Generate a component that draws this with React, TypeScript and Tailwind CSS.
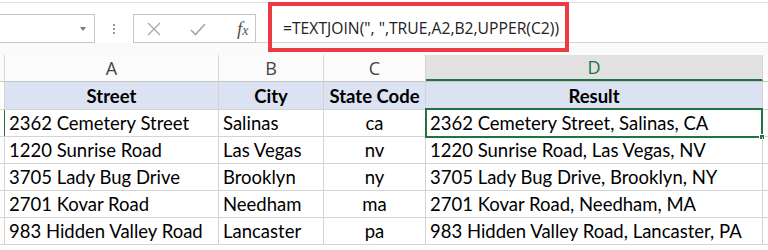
const rows = [
  { street: "2362 Cemetery Street", city: "Salinas", code: "ca", result: "2362 Cemetery Street, Salinas, CA" },
  { street: "1220 Sunrise Road", city: "Las Vegas", code: "nv", result: "1220 Sunrise Road, Las Vegas, NV" },
  { street: "3705 Lady Bug Drive", city: "Brooklyn", code: "ny", result: "3705 Lady Bug Drive, Brooklyn, NY" },
  { street: "2701 Kovar Road", city: "Needham", code: "ma", result: "2701 Kovar Road, Needham, MA" },
  { street: "983 Hidden Valley Road", city: "Lancaster", code: "pa", result: "983 Hidden Valley Road, Lancaster, PA" },
];

const cell = "h-full border-r border-[#d4d4d4] flex items-end pb-[3px] px-[4px] leading-[20px] whitespace-nowrap";

function ColHeader({ label, w, active }: { label: string; w: string; active?: boolean }) {
  return (
    <div
      className={`${w} h-full border-r border-[#d4d4d4] flex items-center justify-center text-[18px] leading-[20px] ${
        active ? "bg-[#e1e1e1] text-[#217346] border-b-2 border-b-[#217346]" : "text-[#444]"
      }`}
    >
      {label}
    </div>
  );
}

export default function App() {
  return (
    <div
      className="relative w-[768px] h-[250px] bg-white overflow-hidden text-black"
      style={{ fontFamily: "Lato, 'Open Sans', sans-serif" }}
    >
      <div className="h-[3px] border-b border-[#e1e1e1]" />

      {/* formula bar */}
      <div className="flex h-[40px] items-end">
        <div className="relative w-[95px] h-[29px] border border-l-0 border-[#c6c6c6] bg-white">
          <div className="absolute right-[8px] top-[12px] w-0 h-0 border-l-[3px] border-r-[3px] border-t-[4px] border-l-transparent border-r-transparent border-t-[#7a7a7a]" />
        </div>
        <div className="w-[38px] h-[29px] flex flex-col items-center justify-center gap-[2px]">
          <span className="w-[2px] h-[2px] bg-[#999]" />
          <span className="w-[2px] h-[2px] bg-[#999]" />
          <span className="w-[2px] h-[2px] bg-[#999]" />
        </div>
        <div className="w-[123px] h-[29px] border border-[#c6c6c6] flex items-center">
          <svg width="14" height="14" viewBox="0 0 14 14" className="ml-[13px]">
            <path d="M1 1L13 13M13 1L1 13" stroke="#a6a6a6" strokeWidth="1.3" />
          </svg>
          <svg width="16" height="14" viewBox="0 0 16 14" className="ml-[29px]">
            <path d="M1 8L5.5 12.5L15 2" stroke="#a6a6a6" strokeWidth="1.6" fill="none" />
          </svg>
          <span
            className="ml-[31px] italic text-[19px] text-[#555] leading-none"
            style={{ fontFamily: "'Liberation Serif', serif" }}
          >
            f<span className="text-[14px]">x</span>
          </span>
        </div>
        <div
          className="flex-1 h-full border-b border-[#d4d4d4] flex items-center pl-[27px] pt-[13px] text-[15.7px] text-[#222] whitespace-nowrap"
          style={{ fontFamily: "'Open Sans', sans-serif" }}
        >
          =TEXTJOIN(", ",TRUE,A2,B2,UPPER(C2))
        </div>
      </div>

      <div className="h-[12px] bg-[#fafafa]" />

      {/* column headers */}
      <div className="flex h-[27px] border-b border-[#c6c6c6] bg-[#fbfbfb]" style={{ fontFamily: "'Open Sans', sans-serif" }}>
        <div className="w-[5px] h-full border-r border-[#d4d4d4]" />
        <ColHeader label="A" w="w-[214px]" />
        <ColHeader label="B" w="w-[105px]" />
        <ColHeader label="C" w="w-[102px]" />
        <ColHeader label="D" w="w-[337px]" active />
      </div>

      {/* header row */}
      <div className="flex h-[28px] border-b border-[#d4d4d4] text-[18.5px] font-bold">
        <div className="w-[5px] h-full border-r border-[#d4d4d4] bg-white" />
        <div className={`${cell} w-[214px] justify-center bg-[#dbe3f2]`}>Street</div>
        <div className={`${cell} w-[105px] justify-center bg-[#dbe3f2]`}>City</div>
        <div className={`${cell} w-[102px] justify-center bg-[#dbe3f2]`}>State Code</div>
        <div className={`${cell} w-[337px] justify-center bg-[#dbe3f2]`}>Result</div>
      </div>

      {rows.map((r, i) => (
        <div key={r.street} className="flex h-[27px] border-b border-[#d4d4d4] text-[18.5px]">
          <div className={`w-[5px] h-full border-r ${i === 0 ? "border-[#217346]" : "border-[#d4d4d4]"}`} />
          <div className={`${cell} w-[214px]`}>{r.street}</div>
          <div className={`${cell} w-[105px]`}>{r.city}</div>
          <div className={`${cell} w-[102px] justify-center`}>{r.code}</div>
          <div className={`${cell} w-[337px] relative`}>
            {r.result}
            {i === 0 && (
              <div className="absolute -left-[1px] -top-[2px] w-[338px] h-[30px] border-2 border-[#217346]">
                <div className="absolute -right-[4px] -bottom-[4px] w-[6px] h-[6px] bg-[#217346] border border-white" />
              </div>
            )}
          </div>
        </div>
      ))}

      {/* annotation */}
      <div className="absolute left-[268px] top-[2px] w-[301px] h-[50px] border-4 border-[#ec3b43]" />
    </div>
  );
}
